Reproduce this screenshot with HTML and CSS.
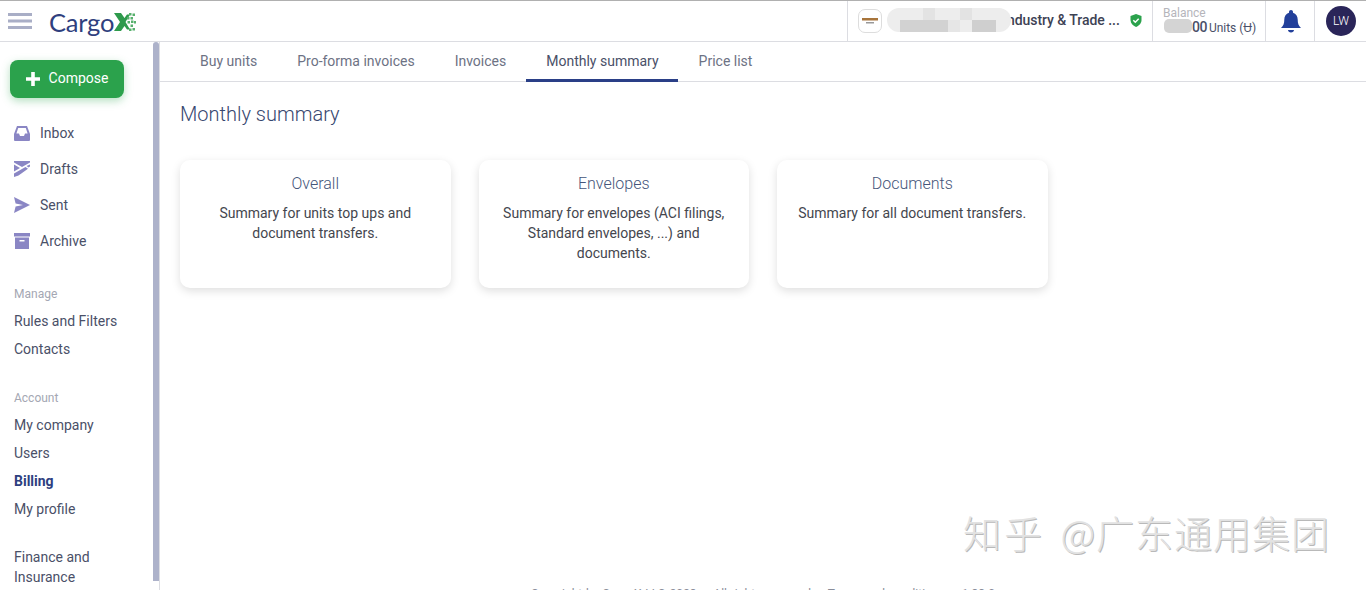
FILE: index.html
```html
<!DOCTYPE html>
<html lang="en">
<head>
<meta charset="utf-8">
<title>CargoX - Monthly summary</title>
<link rel="stylesheet" href="styles.css">
</head>
<body>
<div class="app">
  <header class="topbar">
    <div class="brand">
      <svg class="burger" width="24" height="16" viewBox="0 0 24 16"><path d="M0 0h24v3H0zM0 6.500h24v3H0zM0 13h24v3H0z" fill="#a9aec6"/></svg>
      <span class="logo">Cargo<svg class="logo-x" width="22" height="18" viewBox="0 0 22 18" role="img" aria-label="X"><path d="M0 0h7l3.500 5L13 1.500h3L11.500 9l4.500 7.500h-3L10.500 13 7 18H0l6-9z" fill="#2e9a4c"/><path d="M15 0h2.500v2.500H15zM18.500 .5H21V3h-2.500zM13 4h2.500v2.500H13zM16.500 4H19v2.500h-2.500zM13.500 8h2.500v2.500h-2.500zM17 7.500h2.500V10H17zM20 8h2v2.500h-2zM16.500 11.500H19V14h-2.500zM15 15.500h2.500V18H15zM18.500 15h2.500v2.500h-2.500z" fill="#57b06c"/></svg></span>
    </div>
    <div class="top-right">
      <div class="company">
        <span class="company-logo"><svg width="16" height="8" viewBox="0 0 16 8"><rect y="1" width="16" height="2.500" fill="#a8753c"/><rect x="4" y="5" width="8" height="1.500" fill="#999"/></svg></span>
        <span class="company-name">ndustry &amp; Trade ...</span>
        <span class="blur-patch"><i class="px a"></i><i class="px b"></i><i class="px c"></i><i class="px d"></i><i class="px e"></i></span>
        <svg class="shield" width="12" height="13" viewBox="0 0 12 13"><path d="M6 0l5.500 2v4c0 3.200-2.300 5.800-5.500 7C2.800 11.800.5 9.200.5 6V2z" fill="#2ba24c"/><path d="M3.300 6.300l2 2 3.400-3.500" fill="none" stroke="#fff" stroke-width="1.500"/></svg>
      </div>
      <div class="balance">
        <span class="balance-label">Balance</span>
        <span class="balance-value"><b>00</b> Units (Ʉ)</span>
        <span class="balance-blur"></span>
      </div>
      <div class="bell">
        <svg width="20" height="23" viewBox="0 0 20 23"><path d="M10 0c1.200 0 2 .9 2 2v.700c3 .9 4.700 3.500 4.700 6.800 0 4.200.9 6.300 3.300 8.500H0c2.400-2.200 3.300-4.300 3.300-8.500C3.300 6.200 5 3.600 8 2.700V2c0-1.100.8-2 2-2z" fill="#23409a"/><path d="M7 20h6c0 1.500-1.300 2.500-3 2.500S7 21.500 7 20z" fill="#23409a"/></svg>
      </div>
      <div class="user"><span class="avatar">LW</span></div>
    </div>
  </header>
  <div class="body">
    <aside class="sidebar">
      <div class="compose-wrap">
        <button class="compose"><svg width="14" height="14" viewBox="0 0 14 14"><path d="M5.200 0h3.600v5.200H14v3.600H8.800V14H5.200V8.800H0V5.200h5.200z" fill="#fff"/></svg><span class="compose-label">Compose</span></button>
      </div>
      <nav class="mailbox">
        <a class="mail-item"><svg width="16" height="16" viewBox="0 0 16 16"><path d="M3 1h10l3 8v6a1 1 0 0 1-1 1H1a1 1 0 0 1-1-1V9zM4.200 3L2.400 8.500H5L6 11h4l1-2.500h2.600L11.800 3z" fill="#8a86c4" fill-rule="evenodd"/></svg>Inbox</a>
        <a class="mail-item"><svg width="16" height="16" viewBox="0 0 16 16"><path d="M0 0h16v1.500L8 6 0 1.500zM0 3.500l6 3.500L0 10.500zM16 3.500v2L14.500 6.500 12.500 5zM11.500 6l2.500 1.800L4.500 14.500 0 16v-3.500z" fill="#8a86c4"/></svg>Drafts</a>
        <a class="mail-item"><svg width="16" height="16" viewBox="0 0 16 16"><path d="M0 0l16 8L0 16l1.600-6.500L9 8 1.600 6.500z" fill="#8a86c4"/></svg>Sent</a>
        <a class="mail-item"><svg width="16" height="16" viewBox="0 0 16 16"><path d="M0 0h16v3.500H0zM1 4.500h14V16H1zM5.500 7v1.500h5V7z" fill="#8a86c4" fill-rule="evenodd"/></svg>Archive</a>
      </nav>
      <div class="nav-group group-manage">
        <div class="nav-title">Manage</div>
        <a class="nav-link">Rules and Filters</a>
        <a class="nav-link">Contacts</a>
      </div>
      <div class="nav-group group-account">
        <div class="nav-title">Account</div>
        <a class="nav-link">My company</a>
        <a class="nav-link">Users</a>
        <a class="nav-link active">Billing</a>
        <a class="nav-link">My profile</a>
      </div>
      <a class="nav-finance">Finance and Insurance</a>
      <span class="scroll-thumb"></span>
    </aside>
    <main class="main">
      <nav class="tabs">
        <a class="tab">Buy units</a>
        <a class="tab">Pro-forma invoices</a>
        <a class="tab">Invoices</a>
        <a class="tab current">Monthly summary</a>
        <a class="tab">Price list</a>
      </nav>
      <section class="content">
        <h1 class="page-title">Monthly summary</h1>
        <div class="cards">
          <article class="card"><h2>Overall</h2><p>Summary for units top ups and document transfers.</p></article>
          <article class="card"><h2>Envelopes</h2><p>Summary for envelopes (ACI filings, Standard envelopes, ...) and documents.</p></article>
          <article class="card"><h2>Documents</h2><p>Summary for all document transfers.</p></article>
        </div>
      </section>
      <footer class="footer">Copyright by CargoX LLC 2023 — All rights reserved — Terms and conditions — 1.33.0</footer>
    </main>
  </div>
  <div class="watermark"><span class="wm-name">知乎</span> @广东通用集团</div>
</div>
</body>
</html>
```
FILE: styles.css
```css
* { box-sizing: border-box; }
html, body { margin: 0; height: 590px; overflow: hidden; background: #fff; }
body { font-family: Roboto, "Noto Sans", sans-serif; font-size: 14px; color: #4a5068; }
.app { position: relative; height: 590px; display: flex; flex-direction: column; overflow: hidden; }

.topbar { height: 42px; flex: none; display: flex; justify-content: space-between; border-top: 1px solid #b0b0b0; border-bottom: 1px solid #dcdde2; }
.brand { display: flex; align-items: center; gap: 17px; padding-left: 8px; }
.logo { display: flex; align-items: flex-start; font-family: Lato, sans-serif; font-size: 25.500px; font-weight: 400; color: #2f3f7e; line-height: 30px; height: 30px; margin-top: 2px; letter-spacing: -.2px; }
.logo-x { margin: 6px 0 0 0; }
.top-right { display: flex; height: 40px; }
.company { position: relative; width: 305px; display: flex; align-items: center; border-left: 1px solid #dcdde2; padding-left: 10px; }
.company-logo { width: 24px; height: 24px; border: 1px solid #ddd; border-radius: 7px; display: flex; align-items: center; justify-content: center; flex: none; }
.company-name { margin-left: 125px; margin-top: -2px; font-weight: 500; font-size: 14px; letter-spacing: -.05px; color: #3d4254; white-space: nowrap; }
.shield { margin-left: 10px; flex: none; margin-top: -1px; }
.blur-patch { position: absolute; left: 39px; top: 7px; width: 124px; height: 24px; border-radius: 12px; background: #ededed; overflow: hidden; }
.px { position: absolute; }
.px.a { left: 13px; bottom: 0; width: 48px; height: 12px; background: #d2d2d2; }
.px.b { left: 85px; bottom: 0; width: 24px; height: 12px; background: #cfcfcf; }
.px.c { left: 36px; top: 0; width: 12px; height: 12px; background: #e3e3e3; }
.px.d { left: 73px; top: 0; width: 12px; height: 12px; background: #e3e3e3; }
.px.e { left: 61px; bottom: 0; width: 12px; height: 12px; background: #e6e6e6; }
.balance { position: relative; width: 113px; border-left: 1px solid #dcdde2; padding: 6px 0 0 10px; display: flex; flex-direction: column; }
.balance-label { font-size: 12px; line-height: 13px; color: #b5b5bb; }
.balance-value { font-size: 12px; line-height: 15px; color: #4a5068; padding-left: 29px; white-space: nowrap; letter-spacing: -.05px; }
.balance-value b { font-size: 14px; font-weight: 500; margin-right: -1px; letter-spacing: -.4px; }
.balance-blur { position: absolute; left: 11px; top: 18px; width: 28px; height: 14px; background: #d4d4d4; border-radius: 5px; }
.bell { width: 50px; padding-left: 1px; border-left: 1px solid #dcdde2; border-right: 1px solid #dcdde2; display: flex; align-items: center; justify-content: center; }
.user { width: 51px; display: flex; align-items: center; padding-left: 11px; }
.avatar { width: 30px; height: 30px; border-radius: 50%; background: #2a2559; color: #fff; font-size: 12px; font-weight: 300; display: flex; align-items: center; justify-content: center; }

.body { flex: 1; display: flex; min-height: 0; }
.sidebar { position: relative; width: 160px; flex: none; border-right: 1px solid #dcdde2; padding-left: 14px; }
.scroll-thumb { position: absolute; right: 0; top: 0; width: 6px; height: 539px; background: #adb2ca; border-radius: 3px 3px 0 0; }
.compose-wrap { padding: 18px 0 0 0; margin-left: -4px; }
.compose { width: 114px; height: 38px; background: #2ba24c; border: 0; border-radius: 8px; color: #fff; font: 400 14px Roboto, sans-serif; display: flex; align-items: center; justify-content: center; gap: 9px; box-shadow: 0 3px 8px rgba(43,162,76,.35); padding: 0; }
.compose-label { margin-top: -2px; }
.mailbox { margin-top: 17px; display: flex; flex-direction: column; }
.mail-item { height: 36px; display: flex; align-items: center; gap: 10px; color: #4a5068; }
.nav-group { display: flex; flex-direction: column; }
.group-manage { margin-top: 21px; }
.group-account { margin-top: 21px; }
.nav-title { height: 27px; line-height: 28px; font-size: 12px; color: #a4a7b3; }
.nav-link { height: 28px; line-height: 28px; color: #4a5068; }
.nav-link.active { color: #2d3f80; font-weight: 700; }
.nav-finance { display: block; margin-top: 24px; width: 90px; line-height: 20px; color: #4a5068; }

.main { flex: 1; min-width: 0; display: flex; flex-direction: column; position: relative; }
.tabs { height: 40px; flex: none; display: flex; padding-left: 20px; border-bottom: 1px solid #dcdde2; }
.tab { height: 40px; padding: 0 20px; line-height: 38px; color: #6d7284; }
.tab.current { color: #4a5068; border-bottom: 3px solid #2a3f87; padding-right: 19px; margin-right: 1px; }
.content { padding: 0 20px; flex: 1; }
.page-title { margin: 19px 0 32px; font-size: 20px; font-weight: 300; line-height: 27px; color: #37476f; }
.cards { display: flex; gap: 28px; }
.card { width: 270.500px; height: 128px; padding: 14px 20px 0; background: #fff; border-radius: 10px; box-shadow: 0 3px 10px rgba(0,0,0,.13); text-align: center; }
.card h2 { margin: 0 0 10px; font-size: 16px; font-weight: 300; line-height: 19px; color: #45557a; }
.card p { margin: 0; font-size: 14px; line-height: 20px; color: #44464e; }
.footer { position: absolute; left: 0; right: 0; top: 544px; text-align: center; font-size: 12px; word-spacing: .8px; color: #8a8d99; line-height: 16px; }

.watermark { position: absolute; left: 963px; top: 510px; font-family: "Noto Sans CJK SC", sans-serif; font-size: 38px; font-weight: 300; line-height: 44px; color: #e2e2e2; letter-spacing: 1px; white-space: nowrap; text-shadow: 1px 1px 0 #b9b9b9; }
.wm-name { letter-spacing: 3px; margin-right: 6px; }
```
